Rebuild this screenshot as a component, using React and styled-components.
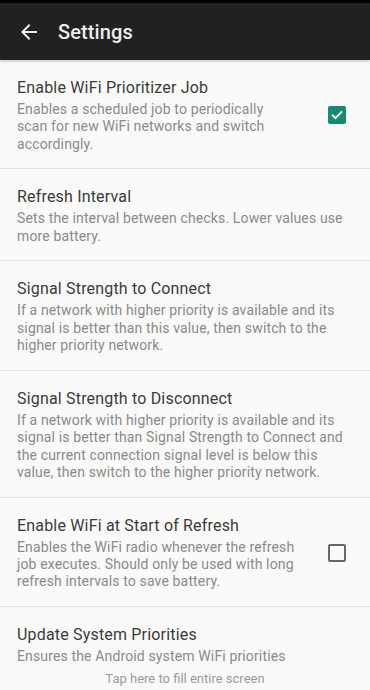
import React from "react";
import styled, { createGlobalStyle } from "styled-components";

const Global = createGlobalStyle`
  html, body { margin: 0; padding: 0; background: #fafafa; }
  body { font-family: Roboto, "Noto Sans", "Liberation Sans", sans-serif; -webkit-font-smoothing: antialiased; }
  * { box-sizing: border-box; }
`;

const Screen = styled.div`
  width: 370px;
  height: 690px;
  background: #fafafa;
  display: flex;
  flex-direction: column;
  overflow: hidden;
`;

const StatusBar = styled.div`
  flex: none;
  height: 3px;
  background: #000;
`;

const Toolbar = styled.header`
  flex: none;
  height: 57px;
  background: #212121;
  display: flex;
  align-items: center;
  padding-left: 17px;
  box-shadow: 0 1px 3px rgba(0, 0, 0, 0.25);
  position: relative;
  z-index: 1;
`;

const BackButton = styled.span`
  display: flex;
  width: 24px;
  height: 24px;
  color: #eeeeee;
`;

const Title = styled.h1`
  margin: 0 0 0 17px;
  font-size: 20px;
  font-weight: 500;
  color: #ececec;
  letter-spacing: 0.1px;
`;

const List = styled.div`
  flex: 1;
  min-height: 0;
  overflow: hidden;
  display: flex;
  flex-direction: column;
`;

const Row = styled.div`
  flex: none;
  display: flex;
  align-items: center;
  padding: 17px 17px 15.2px 17px;
  border-bottom: 1px solid #e4e4e4;
`;

const TextCol = styled.div`
  flex: 1;
  min-width: 0;
  display: flex;
  flex-direction: column;
  gap: 2px;
  padding-right: ${(p) => (p.$widget ? "7px" : "0")};
`;

const PrefTitle = styled.div`
  font-size: 16px;
  line-height: 22px;
  color: #3a3a3a;
  letter-spacing: 0.18px;
`;

const Summary = styled.div`
  font-size: 14px;
  line-height: 17.4px;
  color: #8a8a8a;
  letter-spacing: 0.14px;
`;

const WidgetFrame = styled.div`
  width: 50px;
  display: flex;
  justify-content: flex-end;
  padding-right: 7px;
`;

const CheckBox = styled.span`
  width: 18px;
  height: 18px;
  border-radius: 2px;
  display: flex;
  align-items: center;
  justify-content: center;
  background: ${(p) => (p.$checked ? "#178a71" : "transparent")};
  border: ${(p) => (p.$checked ? "none" : "2px solid #686868")};
`;

const Footer = styled.div`
  flex: none;
  height: 23px;
  background: #fafafa;
  display: flex;
  align-items: center;
  justify-content: center;
  font-size: 13px;
  color: #9a9a9a;
  padding-bottom: 1px;
`;

const ArrowBack = () => (
  <svg width="24" height="24" viewBox="0 0 24 24" fill="currentColor">
    <path d="M20 11H7.83l5.59-5.59L12 4l-8 8 8 8 1.41-1.41L7.83 13H20v-2z" />
  </svg>
);

const Check = () => (
  <svg width="14" height="14" viewBox="0 0 24 24" fill="none" stroke="#fff" strokeWidth="3.2" strokeLinecap="square">
    <path d="M4.5 12.5l5 5L19.5 7" />
  </svg>
);

const prefs = [
  {
    title: "Enable WiFi Prioritizer Job",
    summary: "Enables a scheduled job to periodically scan for new WiFi networks and switch accordingly.",
    checkbox: true,
    checked: true,
  },
  {
    title: "Refresh Interval",
    summary: "Sets the interval between checks. Lower values use more battery.",
  },
  {
    title: "Signal Strength to Connect",
    summary: "If a network with higher priority is available and its signal is better than this value, then switch to the higher priority network.",
  },
  {
    title: "Signal Strength to Disconnect",
    summary: "If a network with higher priority is available and its signal is better than Signal Strength to Connect and the current connection signal level is below this value, then switch to the higher priority network.",
  },
  {
    title: "Enable WiFi at Start of Refresh",
    summary: "Enables the WiFi radio whenever the refresh job executes. Should only be used with long refresh intervals to save battery.",
    checkbox: true,
    checked: false,
  },
  {
    title: "Update System Priorities",
    summary: "Ensures the Android system WiFi priorities",
  },
];

export default function App() {
  return (
    <>
      <Global />
      <Screen>
        <StatusBar />
        <Toolbar>
          <BackButton>
            <ArrowBack />
          </BackButton>
          <Title>Settings</Title>
        </Toolbar>
        <List>
          {prefs.map((p) => (
            <Row key={p.title}>
              <TextCol $widget={p.checkbox}>
                <PrefTitle>{p.title}</PrefTitle>
                <Summary>{p.summary}</Summary>
              </TextCol>
              {p.checkbox && (
                <WidgetFrame>
                  <CheckBox $checked={p.checked}>{p.checked && <Check />}</CheckBox>
                </WidgetFrame>
              )}
            </Row>
          ))}
        </List>
        <Footer>Tap here to fill entire screen</Footer>
      </Screen>
    </>
  );
}
